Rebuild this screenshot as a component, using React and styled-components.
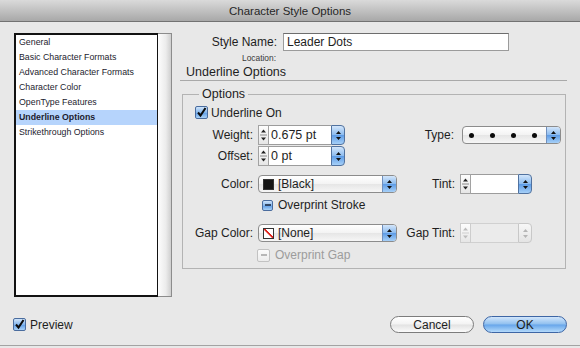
import React from 'react'
import styled, { createGlobalStyle } from 'styled-components'

const Global = createGlobalStyle`
  html, body { margin:0; padding:0; background:#e8e8e8; }
  body { font-family:"Liberation Sans", Arial, sans-serif; color:#1e1e1e; }
  * { box-sizing:border-box; }
`

const Window = styled.div`
  width:580px;
  height:346px;
  display:flex;
  flex-direction:column;
  background:#e8e8e8;
  border-bottom:1px solid #a3a3a3;
  overflow:hidden;
`
const TitleBar = styled.div`
  height:22px;
  flex-shrink:0;
  display:flex;
  align-items:center;
  justify-content:center;
  font-size:11.5px;
  color:#262626;
  background:linear-gradient(#dadada, #a8a8a8);
  border-bottom:1px solid #727272;
`
const Body = styled.div`
  display:flex;
  padding:11px 0 0 14px;
`
const ListBox = styled.div`
  width:158px;
  height:264px;
  display:flex;
  flex-shrink:0;
`
const List = styled.ul`
  list-style:none;
  margin:0;
  padding:0;
  width:144px;
  background:#fff;
  border:2px solid #121212;
  border-right-width:1px;
`
const Item = styled.li`
  height:15px;
  line-height:15px;
  padding-left:3px;
  font-size:8.8px;
  color:#1c1c2e;
  font-weight:${p => (p.$active ? 700 : 400)};
  background:${p => (p.$active ? '#b6d4fc' : 'transparent')};
`
const Scroll = styled.div`
  width:14px;
  border:1px solid #8c8c8c;
  border-left:none;
  background:linear-gradient(to right, #fdfdfd, #ececec 60%, #cfcfcf);
`
const Main = styled.div`
  width:387px;
  margin-left:8px;
  display:flex;
  flex-direction:column;
`
const StyleRow = styled.div`
  display:flex;
  align-items:center;
  height:18px;
`
const RightLabel = styled.span`
  width:${p => p.$w}px;
  flex-shrink:0;
  display:flex;
  justify-content:flex-end;
  white-space:nowrap;
  font-size:12px;
  color:${p => (p.$off ? '#9a9a9a' : '#1e1e1e')};
`
const TextInput = styled.div`
  width:226px;
  height:18px;
  margin-left:6px;
  padding-left:3px;
  display:flex;
  align-items:center;
  font-size:12px;
  background:#fff;
  border:1px solid #9b9b9b;
  border-top-color:#6d6d6d;
`
const Location = styled.div`
  margin-top:2px;
  width:96px;
  height:10px;
  line-height:10px;
  text-align:right;
  font-size:8.4px;
  color:#3a3a3a;
`
const Section = styled.div`
  margin-top:2px;
  padding-left:6px;
  height:16px;
  line-height:14px;
  font-size:12.5px;
  border-bottom:1px solid #a9a9a9;
`
const Group = styled.fieldset`
  margin:6px 0 0 2px;
  width:384px;
  height:182px;
  padding:0 4px 0 9px;
  border:1px solid #b3b3b3;
  min-inline-size:0;
`
const Legend = styled.legend`
  margin-left:7px;
  padding:0 3px;
  font-size:12.5px;
  line-height:14px;
`
const Row = styled.div`
  display:flex;
  align-items:center;
  height:${p => p.$h}px;
  margin-top:${p => p.$mt}px;
  padding-left:${p => p.$indent || 0}px;
`
const CheckText = styled.span`
  margin-left:${p => p.$gap}px;
  font-size:12px;
  color:${p => (p.$off ? '#9c9c9c' : '#1e1e1e')};
`
const Box = styled.span`
  width:${p => p.$size}px;
  height:${p => p.$size}px;
  flex-shrink:0;
  display:flex;
  align-items:center;
  justify-content:center;
  border-radius:2px;
  border:1px solid ${p => (p.$off ? '#c2c2c2' : '#4a6c9e')};
  background:${p => (p.$off
    ? 'linear-gradient(#fbfbfb, #ececec)'
    : 'linear-gradient(#cfe4fb, #84b6ec 50%, #5f9de6 52%, #a9d2f8)')};
`
const Spin = styled.div`
  display:flex;
  width:${p => p.$w}px;
  height:20px;
  margin-left:5px;
  flex-shrink:0;
`
const Steps = styled.span`
  width:11px;
  display:flex;
  align-items:center;
  justify-content:center;
  border:1px solid ${p => (p.$off ? '#cdcdcd' : '#a2a2a2')};
  background:linear-gradient(#fdfdfd, #e6e6e6);
`
const Field = styled.span`
  flex:1;
  display:flex;
  align-items:center;
  padding-left:2px;
  font-size:12.5px;
  background:${p => (p.$off ? '#ebebeb' : '#fff')};
  border:1px solid ${p => (p.$off ? '#d0d0d0' : '#9c9c9c')};
  border-left:none;
  border-right:none;
`
const Blue = styled.span`
  width:14px;
  flex-shrink:0;
  display:flex;
  align-items:center;
  justify-content:center;
  border:1px solid ${p => (p.$off ? '#c8c8c8' : '#51729f')};
  border-radius:0 4px 4px 0;
  background:${p => (p.$off
    ? 'linear-gradient(#f7f7f7, #e4e4e4)'
    : 'linear-gradient(#d3e6fb, #8dbcef 48%, #5e9ce6 52%, #a6d0f8)')};
`
const Popup = styled.div`
  display:flex;
  width:${p => p.$w}px;
  height:18px;
  margin-left:${p => p.$ml}px;
  flex-shrink:0;
  border:1px solid #8c8c8c;
  border-radius:4px;
  overflow:hidden;
  background:linear-gradient(#ffffff, #f3f3f3 50%, #e6e6e6 52%, #f6f6f6);
`
const PopupBody = styled.span`
  flex:1;
  display:flex;
  align-items:center;
  gap:${p => p.$gap}px;
  padding-left:${p => p.$pad}px;
  font-size:12px;
`
const PopupBtn = styled(Blue)`
  border:none;
  border-left:1px solid #6f8fbd;
  border-radius:0;
`
const Swatch = styled.span`
  width:11px;
  height:11px;
  border:1px solid #333;
  background:${p => p.$c};
`
const Dot = styled.span`
  width:5px;
  height:5px;
  border-radius:50%;
  background:#0a0a0a;
`
const Push = styled.div`
  margin-left:auto;
  display:flex;
  align-items:center;
`
const Footer = styled.div`
  margin-top:19px;
  height:17px;
  display:flex;
  align-items:center;
  padding:0 13px;
`
const Buttons = styled.div`
  margin-left:auto;
  display:flex;
  gap:9px;
`
const Button = styled.button`
  width:84px;
  height:17px;
  padding:0;
  font-family:inherit;
  font-size:12px;
  color:#1e1e1e;
  border-radius:9px;
  border:1px solid ${p => (p.$primary ? '#3e66a5' : '#7c7c7c')};
  background:${p => (p.$primary
    ? 'linear-gradient(#d2e6fb, #8fbfef 48%, #66a5ea 52%, #b4dafb)'
    : 'linear-gradient(#ffffff, #f3f3f3 48%, #e2e2e2 52%, #fbfbfb)')};
`

const Arrows = ({ off }) => (
  <svg width="7" height="11" viewBox="0 0 7 11">
    <path d="M3.5 1 L6 4 L1 4 Z M3.5 10 L6 7 L1 7 Z" fill={off ? '#b5b5b5' : '#111'} />
  </svg>
)

const StepArrows = ({ off }) => (
  <svg width="7" height="14" viewBox="0 0 7 14">
    <path d="M3.5 1.5 L6 4.5 L1 4.5 Z M3.5 12.5 L6 9.5 L1 9.5 Z" fill={off ? '#bdbdbd' : '#222'} />
    <line x1="0" y1="7" x2="7" y2="7" stroke={off ? '#cfcfcf' : '#8a8a8a'} />
  </svg>
)

const Check = ({ state = 'on', off, size = 13 }) => (
  <Box $off={off} $size={size}>
    {state === 'on' ? (
      <svg width="11" height="11" viewBox="0 0 11 11">
        <path d="M2 5.5 L4.5 8.5 L9.5 1" fill="none" stroke="#0b0b0b" strokeWidth="2" />
      </svg>
    ) : (
      <svg width="8" height="8" viewBox="0 0 8 8">
        <line x1="1" y1="4" x2="7" y2="4" stroke={off ? '#a8a8a8' : '#1b2a44'} strokeWidth="1.6" />
      </svg>
    )}
  </Box>
)

const Spinner = ({ w, value, off }) => (
  <Spin $w={w}>
    <Steps $off={off}><StepArrows off={off} /></Steps>
    <Field $off={off}>{value}</Field>
    <Blue $off={off}><Arrows off={off} /></Blue>
  </Spin>
)

const items = [
  'General',
  'Basic Character Formats',
  'Advanced Character Formats',
  'Character Color',
  'OpenType Features',
  'Underline Options',
  'Strikethrough Options',
]

export default function App() {
  return (
    <>
      <Global />
      <Window>
        <TitleBar>Character Style Options</TitleBar>
        <Body>
          <ListBox>
            <List>
              {items.map(name => (
                <Item key={name} $active={name === 'Underline Options'}>{name}</Item>
              ))}
            </List>
            <Scroll />
          </ListBox>
          <Main>
            <StyleRow>
              <RightLabel $w={97}>Style Name:</RightLabel>
              <TextInput>Leader Dots</TextInput>
            </StyleRow>
            <Location>Location:</Location>
            <Section>Underline Options</Section>
            <Group>
              <Legend>Options</Legend>
              <Row $h={15} $mt={4} $indent={3}>
                <Check />
                <CheckText $gap={3}>Underline On</CheckText>
              </Row>
              <Row $h={20} $mt={5}>
                <RightLabel $w={61}>Weight:</RightLabel>
                <Spinner w={87} value="0.675 pt" />
                <Push>
                  <RightLabel $w={30}>Type:</RightLabel>
                  <Popup $w={99} $ml={8}>
                    <PopupBody $gap={16} $pad={6}>
                      <Dot /><Dot /><Dot /><Dot />
                    </PopupBody>
                    <PopupBtn><Arrows /></PopupBtn>
                  </Popup>
                </Push>
              </Row>
              <Row $h={20} $mt={1}>
                <RightLabel $w={61}>Offset:</RightLabel>
                <Spinner w={87} value="0 pt" />
              </Row>
              <Row $h={20} $mt={8}>
                <RightLabel $w={61}>Color:</RightLabel>
                <Popup $w={139} $ml={5}>
                  <PopupBody $gap={4} $pad={4}>
                    <Swatch $c="#161616" />[Black]
                  </PopupBody>
                  <PopupBtn><Arrows /></PopupBtn>
                </Popup>
                <RightLabel $w={58}>Tint:</RightLabel>
                <Spinner w={72} value="" />
              </Row>
              <Row $h={12} $mt={5} $indent={70}>
                <Check state="mixed" size={11} />
                <CheckText $gap={5}>Overprint Stroke</CheckText>
              </Row>
              <Row $h={20} $mt={12}>
                <RightLabel $w={61}>Gap Color:</RightLabel>
                <Popup $w={139} $ml={5}>
                  <PopupBody $gap={4} $pad={4}>
                    <Swatch $c="linear-gradient(to top right, #fff 44%, #e0261f 45%, #e0261f 56%, #fff 57%)" />[None]
                  </PopupBody>
                  <PopupBtn><Arrows /></PopupBtn>
                </Popup>
                <RightLabel $w={58}>Gap Tint:</RightLabel>
                <Spinner w={72} value="" off />
              </Row>
              <Row $h={12} $mt={6} $indent={65}>
                <Check state="mixed" off />
                <CheckText $gap={5} $off>Overprint Gap</CheckText>
              </Row>
            </Group>
          </Main>
        </Body>
        <Footer>
          <Check />
          <CheckText $gap={4}>Preview</CheckText>
          <Buttons>
            <Button>Cancel</Button>
            <Button $primary>OK</Button>
          </Buttons>
        </Footer>
      </Window>
    </>
  )
}
